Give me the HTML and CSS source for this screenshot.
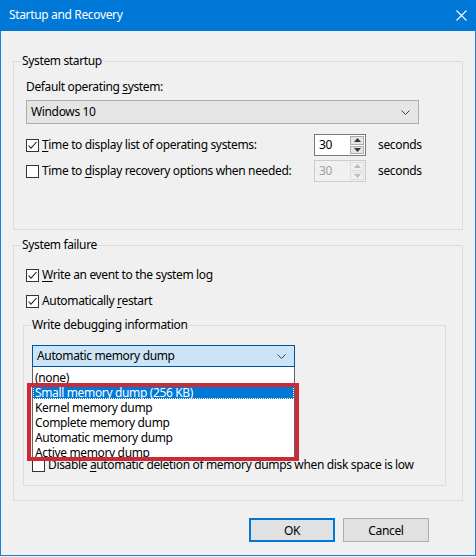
FILE: index.html
```html
<!DOCTYPE html>
<html>
<head>
<meta charset="utf-8">
<link rel="stylesheet" href="styles.css">
</head>
<body>
<div class="window">
  <div class="titlebar">
    <span class="title">Startup and Recovery</span>
    <svg class="close" width="11" height="11" viewBox="0 0 11 11"><path d="M0.5 0.5L10.5 10.5M10.5 0.5L0.5 10.5" stroke="#fff" stroke-width="1.1" fill="none"/></svg>
  </div>
  <div class="content">
    <fieldset class="group g1">
      <legend>System startup</legend>
      <div class="gbody b1">
        <div class="label">Default operating <u>s</u>ystem:</div>
        <div class="combo os">
          <span>Windows 10</span>
          <svg class="chev" width="9" height="5" viewBox="0 0 9 5"><path d="M0.5 0.5L4.5 4.5L8.5 0.5" stroke="#444" fill="none"/></svg>
        </div>
        <div class="srow first">
          <div class="chk"><span class="box"><svg width="11" height="11" viewBox="0 0 11 11"><path d="M1.5 5.5L4 8.2L9.5 2" stroke="#222" stroke-width="1.1" fill="none"/></svg></span><span><u>T</u>ime to display list of operating systems:</span></div>
          <div class="spin"><span class="val">30</span><span class="btns"><span class="sb"><svg width="7" height="4" viewBox="0 0 7 4"><path d="M0 4L3.5 0L7 4Z" fill="#333"/></svg></span><span class="sb"><svg width="7" height="4" viewBox="0 0 7 4"><path d="M0 0L3.5 4L7 0Z" fill="#333"/></svg></span></span></div>
          <span class="sec">seconds</span>
        </div>
        <div class="srow">
          <div class="chk"><span class="box"></span><span>Time to <u>d</u>isplay recovery options when needed:</span></div>
          <div class="spin disabled"><span class="val">30</span><span class="btns"><span class="sb"><svg width="7" height="4" viewBox="0 0 7 4"><path d="M0 4L3.5 0L7 4Z" fill="#bbb"/></svg></span><span class="sb"><svg width="7" height="4" viewBox="0 0 7 4"><path d="M0 0L3.5 4L7 0Z" fill="#bbb"/></svg></span></span></div>
          <span class="sec">seconds</span>
        </div>
      </div>
    </fieldset>

    <fieldset class="group g2">
      <legend>System failure</legend>
      <div class="gbody b2">
        <div class="crow"><span class="box"><svg width="11" height="11" viewBox="0 0 11 11"><path d="M1.5 5.5L4 8.2L9.5 2" stroke="#222" stroke-width="1.1" fill="none"/></svg></span><span><u>W</u>rite an event to the system log</span></div>
        <div class="crow"><span class="box"><svg width="11" height="11" viewBox="0 0 11 11"><path d="M1.5 5.5L4 8.2L9.5 2" stroke="#222" stroke-width="1.1" fill="none"/></svg></span><span>Automatically <u>r</u>estart</span></div>
        <fieldset class="group g3">
          <legend>Write debugging information</legend>
          <div class="gbody b3">
            <div class="dump">
              <div class="combo active">
                <span>Automatic memory dump</span>
                <svg class="chev" width="9" height="5" viewBox="0 0 9 5"><path d="M0.5 0.5L4.5 4.5L8.5 0.5" stroke="#444" fill="none"/></svg>
              </div>
              <ul class="list">
                <li>(none)</li>
                <li class="sel">Small memory dump (256 KB)</li>
                <li>Kernel memory dump</li>
                <li>Complete memory dump</li>
                <li>Automatic memory dump</li>
                <li>Active memory dump</li>
              </ul>
              <div class="highlight"></div>
            </div>
            <div class="spacer"></div>
            <div class="crow small"><span class="box"></span><span>Disable <u>a</u>utomatic deletion of memory dumps when disk space is low</span></div>
          </div>
        </fieldset>
      </div>
    </fieldset>

    <div class="buttons">
      <button class="btn default">OK</button>
      <button class="btn">Cancel</button>
    </div>
  </div>
</div>
</body>
</html>
```

FILE: styles.css
```css
* { box-sizing: border-box; }
html, body { margin: 0; padding: 0; background: #f0f0f0; }
body {
  font-family: "Noto Sans", "Open Sans", sans-serif;
  font-size: 12px;
  line-height: 16px;
  letter-spacing: -0.35px;
  color: #000;
}
.window {
  width: 476px;
  height: 556px;
  border: 1px solid #1a7fd4;
  border-top: none;
  background: #f0f0f0;
}
.titlebar {
  height: 31px;
  background: #0078d7;
  color: #fff;
  display: flex;
  align-items: center;
  justify-content: space-between;
  padding: 0 9px 1px 9px;
  margin: 0 -1px;
}
.title { font-size: 12px; }
.close { display: block; margin-top: 1px; }
.content { padding: 0 12px; }

fieldset.group {
  margin: 0;
  padding: 0;
  border: 1px solid #dcdcdc;
  min-width: 0;
}
fieldset.group > legend {
  margin-left: 7px;
  padding: 0 1px;
  line-height: 16px;
}
fieldset.g1 { margin-top: 22px; }
.b1 { padding: 10px 12px 45px 12px; }
.label { height: 16px; }
.combo {
  display: flex;
  align-items: center;
  justify-content: space-between;
  border: 1px solid #adadad;
  background: #e5e5e5;
  padding: 0 8px 0 4px;
}
.combo.os { margin-top: 5px; height: 24px; width: 393px; }
.chev { display: block; }
.srow {
  display: grid;
  grid-template-columns: 288px 52px auto;
  align-items: center;
  height: 26px;
}
.srow.first { margin-top: 8px; }
.sec { margin-left: 12px; }
.chk, .crow { display: flex; align-items: center; }
.box {
  width: 13px;
  height: 13px;
  border: 1px solid #333;
  background: #fff;
  margin-right: 3px;
  flex: none;
  display: flex;
  align-items: center;
  justify-content: center;
}
.box svg { display: block; }
u { text-decoration: underline; text-underline-offset: 2px; }
.spin {
  height: 22px;
  border: 1px solid #7a7a7a;
  background: #fff;
  display: flex;
  align-items: center;
  justify-content: space-between;
  padding: 0 1px 0 4px;
}
.spin .btns {
  display: flex;
  flex-direction: column;
  gap: 1px;
  height: 18px;
}
.spin .sb {
  width: 14px;
  height: 8.5px;
  border: 1px solid #adadad;
  background: #e5e5e5;
  display: flex;
  align-items: center;
  justify-content: center;
}
.spin.disabled { border-color: #ccc; background: #f0f0f0; color: #a0a0a0; }
.spin.disabled .sb { border-color: #ddd; background: #f0f0f0; }

fieldset.g2 { margin-top: 7px; }
.b2 { padding: 9px 0 14px 0; }
.crow { height: 26px; padding-left: 12px; }
fieldset.g3 { margin: 3px 16px 0 9px; }
.b3 { padding: 12px 0 12px 8px; }
.dump { position: relative; width: 263px; }
.combo.active {
  height: 22px;
  background: #cce4f7;
  border-color: #005499;
  padding-left: 4px;
}
.list {
  position: absolute;
  top: 22px;
  left: 0;
  width: 263px;
  margin: 0;
  padding: 2px 0 1px 0;
  list-style: none;
  background: #fff;
  border: 1px solid #646464;
  border-top: none;
  z-index: 2;
}
.list li {
  height: 15px;
  line-height: 17px;
  padding-left: 2px;
}
.list li.sel {
  background: #0078d7;
  color: #fff;
  outline: 1px dotted #fff;
  outline-offset: -1px;
}
.highlight {
  position: absolute;
  left: -5px;
  top: 38px;
  width: 272px;
  height: 78px;
  border: 4px solid #cb2a36;
  z-index: 3;
}
.spacer { height: 90px; }
.crow.small { height: 16px; padding-left: 0; }

.buttons {
  display: flex;
  justify-content: flex-end;
  gap: 8px;
  margin-top: 17px;
  padding-right: 34px;
}
.btn {
  width: 86px;
  height: 24px;
  font-family: inherit;
  font-size: 12px;
  letter-spacing: inherit;
  background: #e1e1e1;
  border: 1px solid #adadad;
  color: #000;
  padding: 0;
}
.btn.default { border: 2px solid #0078d7; }
```
